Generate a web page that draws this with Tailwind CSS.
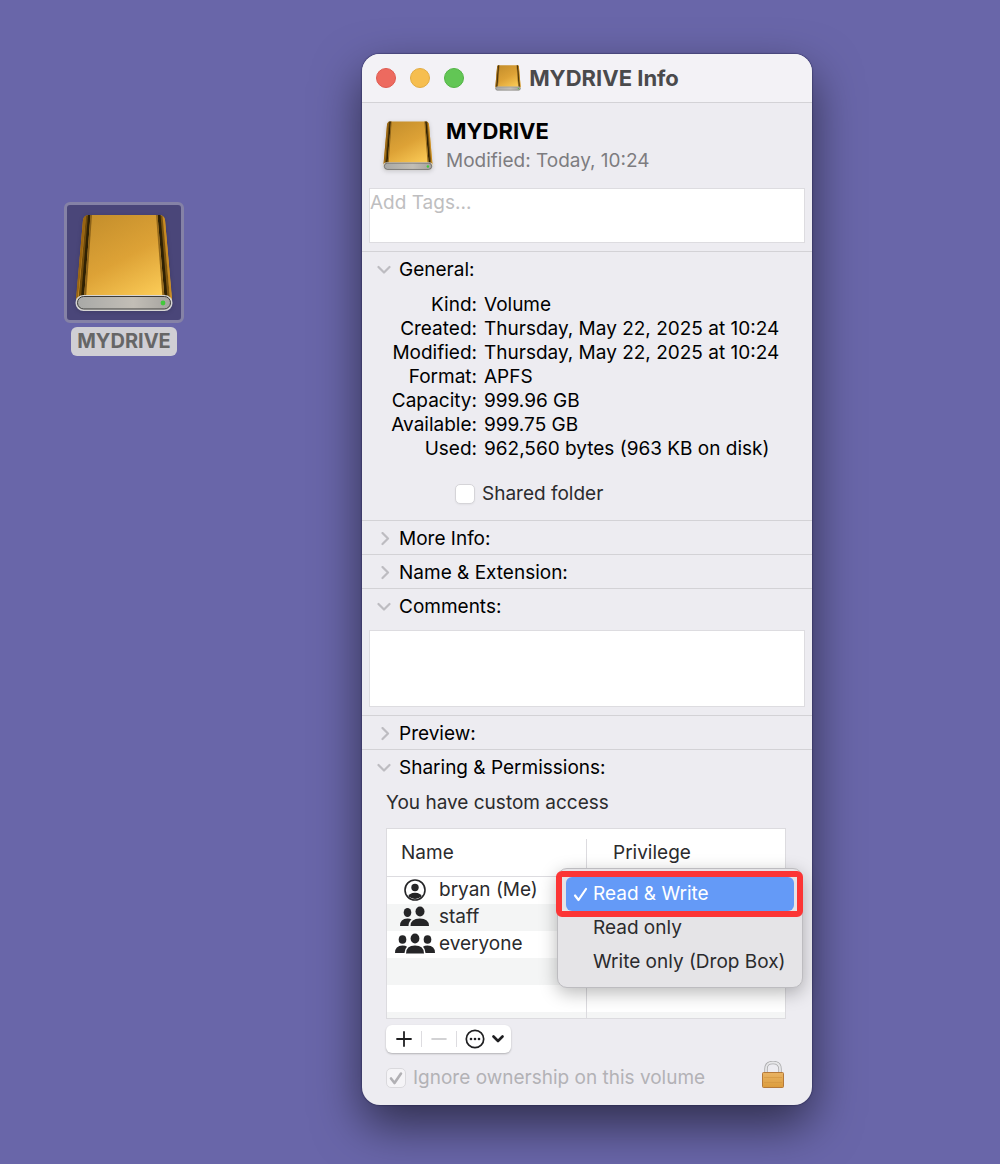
<!DOCTYPE html>
<html lang="en">
<head>
  <meta charset="UTF-8" />
  <meta name="viewport" content="width=device-width, initial-scale=1" />
  <title>MYDRIVE Info</title>
  <script src="https://cdn.jsdelivr.net/npm/@tailwindcss/browser@4"></script>
</head>
<body class="min-h-screen bg-[#6966a9] border-b border-white font-['Inter',sans-serif] text-[19px] leading-6 text-black">

  <!-- Shared icons -->
  <svg class="absolute w-0 h-0" aria-hidden="true">
    <defs>
      <linearGradient id="gold" x1="0.2" y1="0" x2="0.8" y2="1">
        <stop offset="0" stop-color="#c58f2c" />
        <stop offset="0.5" stop-color="#dda236" />
        <stop offset="1" stop-color="#fdce59" />
      </linearGradient>
      <linearGradient id="metal">
        <stop offset="0" stop-color="#a9a9a7" />
        <stop offset="0.6" stop-color="#c2beb6" />
        <stop offset="1" stop-color="#a5a39f" />
      </linearGradient>
      <linearGradient id="brass" x1="0" y1="0" x2="0" y2="1">
        <stop offset="0" stop-color="#e9b465" />
        <stop offset="1" stop-color="#dc9c3c" />
      </linearGradient>
    </defs>
    <symbol id="drive" viewBox="0 0 98 98">
      <path d="M14 1H84Q89 1 90 6L97 88H1L8 6Q9 1 14 1Z" fill="url(#gold)" />
      <path d="M14 1Q9 1 8 6L1 84H3L11 1.500Z" fill="#9a6410" />
      <path d="M11 1.500L3.500 84H7.500L14 1Z" fill="#6e4a0b" />
      <path d="M13 1L6 84H9L15.500 1Z" fill="#2f2103" />
      <path d="M15.500 1L9 84H11L17 1Z" fill="#8a611a" />
      <path d="M84 1Q89 1 90 6L97 84H95L87 1.500Z" fill="#c98b22" />
      <path d="M84.500 1L91.500 84H95L87.500 2Z" fill="#7a5410" />
      <path d="M82.500 1L89.500 84H92.500L85.500 1Z" fill="#2f2103" />
      <path d="M81 1L87.500 84H89.500L82.500 1Z" fill="#94691d" />
      <rect x="0.5" y="81" width="97" height="16" rx="8" fill="#d6d5d3" />
      <rect x="2.5" y="82.5" width="93" height="12.5" rx="6.2" fill="url(#metal)" stroke="#3d3c3a" stroke-width="1" />
      <circle cx="88" cy="89" r="2.4" fill="#43c83c" />
    </symbol>
    <symbol id="chev-down" viewBox="0 0 14 14">
      <path d="M1.5 4L7 9.500L12.500 4" fill="none" stroke="#bdbcc1" stroke-width="2.200" stroke-linecap="round" stroke-linejoin="round" />
    </symbol>
    <symbol id="chev-right" viewBox="0 0 14 14">
      <path d="M5.500 1L11 6.500L5.500 12" fill="none" stroke="#bdbcc1" stroke-width="2.200" stroke-linecap="round" stroke-linejoin="round" />
    </symbol>
  </svg>

  <main class="flex items-start gap-[178px] pt-[54px] pb-[59px] pl-16 pr-[188px]">

    <!-- Desktop icon -->
    <figure class="mt-[148px] w-[120px] shrink-0 flex flex-col items-center gap-1">
      <div class="w-full h-[121px] rounded-md border-3 border-[#8582a6] bg-[#4a4679] flex items-center justify-center">
        <svg class="w-[98px] h-[98px] drop-shadow-sm"><use href="#drive" /></svg>
      </div>
      <figcaption class="h-[29px] px-1.5 rounded-md bg-[#d0cfd4] text-[#666] text-[20px] leading-[29px] font-bold">MYDRIVE</figcaption>
    </figure>

    <!-- Info window -->
    <section class="flex-1 min-w-0 rounded-[18px] bg-[#edecf1] shadow-[0_0_1px_1px_rgba(30,28,70,0.35),0_20px_48px_rgba(0,0,0,0.55)]">
      <header class="relative h-12 flex items-center justify-center gap-2 rounded-t-[18px] bg-[#f3f2f6]">
        <div class="absolute left-[14px] flex gap-[14px]">
          <button aria-label="Close" class="size-5 rounded-full bg-[#ed6a5f] border border-[#df5b51]"></button>
          <button aria-label="Minimize" class="size-5 rounded-full bg-[#f6be4f] border border-[#e2ac42]"></button>
          <button aria-label="Zoom" class="size-5 rounded-full bg-[#62c655] border border-[#52b445]"></button>
        </div>
        <svg class="size-[26px]"><use href="#drive" /></svg>
        <h1 class="text-[22px] font-bold text-[#4a4a4c]">MYDRIVE Info</h1>
      </header>

      <div class="border-t border-[#d3d2d6] px-[7px] pt-[13px] pb-2">
        <div class="flex items-center gap-[13px] pl-[14px] mb-3">
          <svg class="size-[50px] drop-shadow-sm"><use href="#drive" /></svg>
          <div class="leading-[30px]">
            <h2 class="text-[22px] leading-[30px] font-bold">MYDRIVE</h2>
            <p class="text-[#7d7c80]">Modified: Today, 10:24</p>
          </div>
        </div>
        <textarea aria-label="Tags" placeholder="Add Tags..." class="block w-full h-[55px] resize-none border border-[#dddce0] bg-white leading-7 placeholder:text-[#bebec0] outline-none"></textarea>
      </div>

      <details open class="border-t border-[#d3d2d6]">
        <summary class="flex items-center gap-2 h-[35px] pl-[15px] list-none">
          <svg class="size-[14px]"><use href="#chev-down" /></svg>General:
        </summary>
        <dl class="grid grid-cols-[115px_1fr] gap-x-[7px] pt-[6px]">
          <dt class="text-right">Kind:</dt><dd>Volume</dd>
          <dt class="text-right">Created:</dt><dd>Thursday, May 22, 2025 at 10:24</dd>
          <dt class="text-right">Modified:</dt><dd>Thursday, May 22, 2025 at 10:24</dd>
          <dt class="text-right">Format:</dt><dd>APFS</dd>
          <dt class="text-right">Capacity:</dt><dd>999.96 GB</dd>
          <dt class="text-right">Available:</dt><dd>999.75 GB</dd>
          <dt class="text-right">Used:</dt><dd>962,560 bytes (963 KB on disk)</dd>
        </dl>
        <label class="flex items-center gap-[7px] pl-[93px] pt-[21px] pb-[14px] text-[#2b2b2d]">
          <input type="checkbox" class="appearance-none size-5 rounded-[5px] border border-[#d5d4d8] bg-white shadow-xs" />Shared folder
        </label>
      </details>

      <details class="border-t border-[#d3d2d6]">
        <summary class="flex items-center gap-2 h-[33px] pl-[15px] pt-0.5 list-none">
          <svg class="size-[14px]"><use href="#chev-right" /></svg>More Info:
        </summary>
      </details>

      <details class="border-t border-[#d3d2d6]">
        <summary class="flex items-center gap-2 h-[33px] pl-[15px] pt-0.5 list-none">
          <svg class="size-[14px]"><use href="#chev-right" /></svg>Name &amp; Extension:
        </summary>
      </details>

      <details open class="border-t border-[#d3d2d6]">
        <summary class="flex items-center gap-2 h-[35px] pl-[15px] list-none">
          <svg class="size-[14px]"><use href="#chev-down" /></svg>Comments:
        </summary>
        <div class="px-[7px] pt-[6px] pb-2">
          <textarea aria-label="Comments" class="block w-full h-[77px] resize-none border border-[#dddce0] bg-white outline-none"></textarea>
        </div>
      </details>

      <details class="border-t border-[#d3d2d6]">
        <summary class="flex items-center gap-2 h-[33px] pl-[15px] pt-0.5 list-none">
          <svg class="size-[14px]"><use href="#chev-right" /></svg>Preview:
        </summary>
      </details>

      <details open class="border-t border-[#d3d2d6]">
        <summary class="flex items-center gap-2 h-[35px] pl-[15px] list-none">
          <svg class="size-[14px]"><use href="#chev-down" /></svg>Sharing &amp; Permissions:
        </summary>
        <div class="pl-6 pr-[26px] pt-[6px] pb-3 text-[#2b2b2d]">
          <p>You have custom access</p>

          <div class="relative mt-[13px]">
            <div class="h-[191px] overflow-hidden border border-[#dcdbdf] bg-white">
              <table class="w-full table-fixed border-collapse text-left">
                <thead>
                  <tr class="h-[47px] border-b border-[#dddce0]">
                    <th class="p-0 pl-[14px] font-normal">Name</th>
                    <th class="p-0 font-normal"><span class="block border-l border-[#dcdbdf] mt-[10px] h-[37px] leading-7 pl-[26px]">Privilege</span></th>
                  </tr>
                </thead>
                <tbody>
                  <tr class="h-[27px]">
                    <td class="p-0"><span class="flex items-center">
                      <svg class="w-[56px] h-[22px] shrink-0" viewBox="0 0 56 22">
                        <clipPath id="disc"><circle cx="28" cy="11" r="9" /></clipPath>
                        <circle cx="28" cy="11" r="10" fill="none" stroke="#252527" stroke-width="1.600" />
                        <circle cx="28" cy="8.500" r="3.700" fill="#252527" />
                        <ellipse cx="28" cy="18.500" rx="7.200" ry="4.700" fill="#252527" clip-path="url(#disc)" />
                      </svg>
                      <span class="whitespace-nowrap -ml-1">bryan (Me)</span></span></td>
                    <td class="border-l border-[#dcdbdf] p-0"></td>
                  </tr>
                  <tr class="h-[27px] bg-[#f4f5f5]">
                    <td class="p-0"><span class="flex items-center">
                      <svg class="w-[56px] h-[22px] shrink-0" viewBox="0 0 56 22" fill="#252527">
                        <ellipse cx="20.500" cy="6.500" rx="3.800" ry="4.500" />
                        <path d="M13 20Q13 12.500 20.500 12.500Q23 12.500 24.500 13.500Q21.500 16 21.500 20Z" />
                        <ellipse cx="33" cy="5.500" rx="4.500" ry="5" />
                        <path d="M23.500 20Q23.500 12.500 32.800 12.500Q42 12.500 42 20Z" />
                      </svg>
                      <span class="-ml-1">staff</span></span></td>
                    <td class="border-l border-[#dcdbdf] p-0"></td>
                  </tr>
                  <tr class="h-[27px]">
                    <td class="p-0"><span class="flex items-center">
                      <svg class="w-[56px] h-[22px] shrink-0" viewBox="0 0 56 22" fill="#252527">
                        <ellipse cx="15.500" cy="6.500" rx="3.800" ry="4.300" />
                        <path d="M8 20Q8 12.500 15.500 12.500Q18.500 12.500 20 13.700Q17.500 16 17.500 20Z" />
                        <ellipse cx="28" cy="5.500" rx="4.400" ry="5" />
                        <path d="M19 20.500Q19 12.500 28 12.500Q37 12.500 37 20.500Z" />
                        <ellipse cx="40.500" cy="6.500" rx="3.800" ry="4.300" />
                        <path d="M48 20Q48 12.500 40.500 12.500Q37.500 12.500 36 13.700Q38.500 16 38.500 20Z" />
                      </svg>
                      <span class="-ml-1">everyone</span></span></td>
                    <td class="border-l border-[#dcdbdf] p-0"></td>
                  </tr>
                  <tr class="h-[27px] bg-[#f4f5f5]"><td></td><td class="border-l border-[#dcdbdf]"></td></tr>
                  <tr class="h-[27px]"><td></td><td class="border-l border-[#dcdbdf]"></td></tr>
                  <tr class="h-[27px] bg-[#f4f5f5]"><td></td><td class="border-l border-[#dcdbdf]"></td></tr>
                </tbody>
              </table>
            </div>

            <!-- Privilege menu -->
            <div role="menu" class="absolute top-10 -right-[17px] w-[246px] rounded-[10px] border border-[#bdbcc0] bg-[#e5e4e7] px-2 pt-2 pb-2 shadow-[0_5px_18px_rgba(0,0,0,0.28)]">
              <button role="menuitemradio" aria-checked="true" class="flex items-center w-full h-[34px] rounded-md bg-[#649af7] pl-[7px] gap-[5px] text-white">
                <svg class="size-[15px]" viewBox="0 0 15 15" fill="none" stroke="#fff" stroke-width="2.200" stroke-linecap="round" stroke-linejoin="round"><path d="M2 8.500L5.500 13L13 2" /></svg>Read &amp; Write
              </button>
              <button role="menuitemradio" aria-checked="false" class="block w-full h-[34px] pl-[27px] text-left">Read only</button>
              <button role="menuitemradio" aria-checked="false" class="block w-full h-[34px] pl-[27px] text-left whitespace-nowrap">Write only (Drop Box)</button>
              <div class="absolute top-0.5 -left-0.5 -right-px h-[46px] rounded-md border-6 border-[#fc3535] pointer-events-none"></div>
            </div>
          </div>

          <div class="mt-[6px] inline-flex items-center h-7 rounded-md bg-white shadow-[0_1px_2px_rgba(0,0,0,0.25)] align-top">
            <button aria-label="Add" class="w-[35px] flex justify-center">
              <svg class="size-4" viewBox="0 0 16 16" stroke="#1f1f21" stroke-width="1.800" stroke-linecap="round"><path d="M8 1V15M1 8H15" /></svg>
            </button>
            <button aria-label="Remove" disabled class="w-9 flex justify-center border-x border-[#dddce0] h-4 items-center">
              <svg class="size-4" viewBox="0 0 16 16" stroke="#c4c4c6" stroke-width="1.600" stroke-linecap="round"><path d="M1 8H15" /></svg>
            </button>
            <button aria-label="Actions" class="w-[54px] flex items-center justify-center gap-[7px]">
              <svg class="size-5" viewBox="0 0 20 20" fill="#1f1f21"><circle cx="10" cy="10" r="8.700" fill="none" stroke="#1f1f21" stroke-width="1.700" /><circle cx="6" cy="10" r="1.300" /><circle cx="10" cy="10" r="1.300" /><circle cx="14" cy="10" r="1.300" /></svg>
              <svg class="w-3 h-2" viewBox="0 0 12 8" fill="none" stroke="#1f1f21" stroke-width="2.600" stroke-linecap="round" stroke-linejoin="round"><path d="M1.500 1.500L6 6L10.500 1.500" /></svg>
            </button>
          </div>

          <div class="flex items-center justify-between mt-[10px] h-[30px]">
            <label class="flex items-center gap-[7px] text-[#b3b2b6]">
              <span class="relative size-5">
                <input type="checkbox" checked disabled class="appearance-none block size-5 rounded-[5px] border border-[#dad9dd] bg-[#f5f4f7]" />
                <svg class="absolute inset-0 size-5" viewBox="0 0 20 20" fill="none" stroke="#b1b0b4" stroke-width="2.600" stroke-linecap="round" stroke-linejoin="round"><path d="M5 10.500L8.500 15L15 5.500" /></svg>
              </span>
              Ignore ownership on this volume
            </label>
            <button aria-label="Unlock" class="mr-0.5 -mt-2">
              <svg class="w-[22px] h-[27px]" viewBox="0 0 22 27">
                <path d="M4 13V8Q4 1.500 11 1.500Q18 1.500 18 8V13" fill="none" stroke="#a9a9ab" stroke-width="3.400" />
                <path d="M4 13V8Q4 1.500 11 1.500Q18 1.500 18 8V13" fill="none" stroke="#e6e6e8" stroke-width="1.800" />
                <rect x="0.500" y="11.500" width="21" height="15" rx="1" fill="url(#brass)" stroke="#b5793a" />
                <path d="M2 16.500H20M2 21.500H20" stroke="#d09340" stroke-width="0.600" />
              </svg>
            </button>
          </div>
        </div>
      </details>
    </section>
  </main>
</body>
</html>
